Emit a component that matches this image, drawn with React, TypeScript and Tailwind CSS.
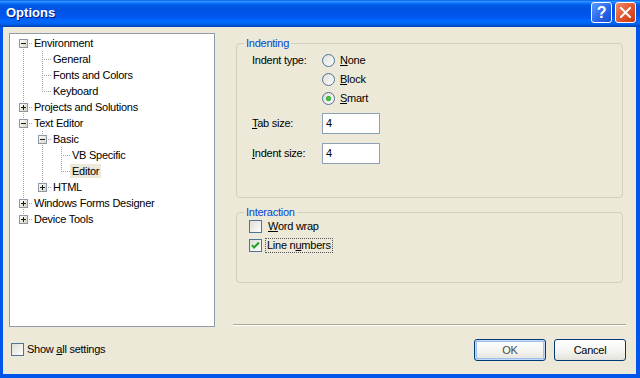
import React from 'react';

type Node = {
  label: string;
  level: number;
  box?: 'plus' | 'minus';
  first?: boolean;
  last?: boolean;
  rails?: number[];
  selected?: boolean;
};

const tree: Node[] = [
  { label: 'Environment', level: 0, box: 'minus', first: true },
  { label: 'General', level: 1, rails: [0] },
  { label: 'Fonts and Colors', level: 1, rails: [0] },
  { label: 'Keyboard', level: 1, rails: [0], last: true },
  { label: 'Projects and Solutions', level: 0, box: 'plus' },
  { label: 'Text Editor', level: 0, box: 'minus' },
  { label: 'Basic', level: 1, box: 'minus', rails: [0] },
  { label: 'VB Specific', level: 2, rails: [0, 1] },
  { label: 'Editor', level: 2, rails: [0, 1], last: true, selected: true },
  { label: 'HTML', level: 1, box: 'plus', rails: [0], last: true },
  { label: 'Windows Forms Designer', level: 0, box: 'plus' },
  { label: 'Device Tools', level: 0, box: 'plus', last: true },
];

const dot = '#A0A0A0';

const Gutter: React.FC<{ n: Node }> = ({ n }) => {
  const w = 22 + 19 * n.level;
  const c = 13 + 19 * n.level;
  return (
    <svg width={w} height={16} className="shrink-0" shapeRendering="crispEdges">
      {(n.rails || []).map((a) => (
        <line key={a} x1={13 + 19 * a + 0.5} y1={0} x2={13 + 19 * a + 0.5} y2={16} stroke={dot} strokeDasharray="1 1" />
      ))}
      {!n.first && <line x1={c + 0.5} y1={0} x2={c + 0.5} y2={8} stroke={dot} strokeDasharray="1 1" />}
      {!n.last && <line x1={c + 0.5} y1={8} x2={c + 0.5} y2={16} stroke={dot} strokeDasharray="1 1" />}
      <line x1={c} y1={8.5} x2={c + 10} y2={8.5} stroke={dot} strokeDasharray="1 1" />
      {n.box && (
        <g>
          <defs>
            <linearGradient id="bx" x1="0" y1="0" x2="1" y2="1">
              <stop offset="0" stopColor="#ffffff" />
              <stop offset="1" stopColor="#D6D2C2" />
            </linearGradient>
          </defs>
          <rect x={c - 4 + 0.5} y={4.5} width={8} height={8} fill="url(#bx)" stroke="#8C98A6" />
          <line x1={c - 2} y1={8.5} x2={c + 3} y2={8.5} stroke="#1a1a1a" />
          {n.box === 'plus' && <line x1={c + 0.5} y1={6} x2={c + 0.5} y2={11} stroke="#1a1a1a" />}
        </g>
      )}
    </svg>
  );
};

const Radio: React.FC<{ checked?: boolean }> = ({ checked }) => (
  <svg width={13} height={13} className="shrink-0">
    <defs>
      <linearGradient id="rg" x1="0" y1="0" x2="1" y2="1">
        <stop offset="0" stopColor="#DCDBD5" />
        <stop offset="1" stopColor="#ffffff" />
      </linearGradient>
      <radialGradient id="rd">
        <stop offset="0" stopColor="#5BD35B" />
        <stop offset="1" stopColor="#21A121" />
      </radialGradient>
    </defs>
    <circle cx={6.5} cy={6.5} r={6} fill="url(#rg)" stroke="#4F7396" />
    {checked && <circle cx={6.5} cy={6.5} r={2.5} fill="url(#rd)" />}
  </svg>
);

const Check: React.FC<{ checked?: boolean }> = ({ checked }) => (
  <svg width={13} height={13} className="shrink-0" shapeRendering="crispEdges">
    <defs>
      <linearGradient id="cg" x1="0" y1="0" x2="1" y2="1">
        <stop offset="0" stopColor="#DCDBD5" />
        <stop offset="1" stopColor="#ffffff" />
      </linearGradient>
    </defs>
    <rect x={0.5} y={0.5} width={12} height={12} fill="url(#cg)" stroke="#4F7396" />
    {checked && (
      <path d="M3 6 L5 8.5 L10 3.5" fill="none" stroke="#21A121" strokeWidth={2} shapeRendering="auto" />
    )}
  </svg>
);

const Group: React.FC<{ title: string; h: string; mt: string; children: React.ReactNode }> = ({ title, h, mt, children }) => (
  <fieldset className={`mx-[3px] ${mt} ${h} rounded-[4px] border border-[#D0D0BF] p-0`}>
    <legend className="ml-[7px] px-[2px] text-[11px] leading-[13px] text-[#0046D5]">{title}</legend>
    {children}
  </fieldset>
);

const Field: React.FC<{ value: string }> = ({ value }) => (
  <div className="flex h-[21px] w-[58px] items-center border border-[#8DA2B9] bg-white pl-[3px]">{value}</div>
);

export default function App() {
  return (
    <div className="flex h-[378px] w-[640px] flex-col font-['Liberation_Sans',Arial,sans-serif] text-[11px] tracking-[-0.25px] text-black">
      <div className="flex h-[27px] shrink-0 items-start justify-between bg-[linear-gradient(to_bottom,#0058EE_0%,#3593FF_5%,#127DFF_10%,#0262EE_16%,#0057E5_22%,#0054E3_30%,#0055EB_56%,#005BF5_68%,#026AFE_78%,#0062EF_88%,#0052D6_94%,#0040AB_100%)]">
        <span className="ml-[6px] mt-[5px] text-[13px] font-bold leading-[16px] tracking-normal text-white [text-shadow:1px_1px_#0A1883]">Options</span>
        <div className="mr-[4px] mt-[2px] flex gap-[3px]">
          <div className="flex h-[21px] w-[21px] items-center justify-center rounded-[3px] border border-white bg-[linear-gradient(135deg,#5A9BFF,#2762E8_60%,#1A4FD0)] text-[16px] font-bold leading-none text-white">
            ?
          </div>
          <div className="flex h-[21px] w-[21px] items-center justify-center rounded-[3px] border border-white bg-[linear-gradient(135deg,#F08A66,#E0532C_55%,#C63A12)]">
            <svg width={11} height={11}>
              <path d="M1 1 L10 10 M10 1 L1 10" stroke="#fff" strokeWidth={2} strokeLinecap="square" />
            </svg>
          </div>
        </div>
      </div>
      <div className="flex flex-1 flex-col border-b-[4px] border-l-[3px] border-r-[4px] border-[#0055EA] bg-[#ECE9D8] pl-[6px] pr-[10px] pt-[6px]">
        <div className="flex">
          <div className="h-[294px] w-[206px] shrink-0 border border-[#8E9BA8] bg-white pt-[1px]">
            {tree.map((n) => (
              <div key={n.label} className="flex h-[16px] items-center">
                <Gutter n={n} />
                <span className={`px-[2px] leading-[14px] whitespace-nowrap ${n.selected ? 'bg-[#ECE9D8]' : ''}`}>{n.label}</span>
              </div>
            ))}
          </div>
          <div className="ml-[18px] flex h-[294px] flex-1 flex-col">
            <Group title="Indenting" h="h-[161px]" mt="mt-[4px]">
              <div className="flex flex-col pl-[15px] pt-[1px]">
                <div className="flex">
                  <span className="flex h-[19px] w-[70px] items-center">Indent type:</span>
                  <div className="flex flex-col">
                    <div className="flex h-[19px] items-center gap-[5px]">
                      <Radio />
                      <span><u>N</u>one</span>
                    </div>
                    <div className="flex h-[19px] items-center gap-[5px]">
                      <Radio />
                      <span><u>B</u>lock</span>
                    </div>
                    <div className="flex h-[19px] items-center gap-[5px]">
                      <Radio checked />
                      <span><u>S</u>mart</span>
                    </div>
                  </div>
                </div>
                <div className="mt-[5px] flex items-center">
                  <span className="w-[70px]"><u>T</u>ab size:</span>
                  <Field value="4" />
                </div>
                <div className="mt-[9px] flex items-center">
                  <span className="w-[70px]"><u>I</u>ndent size:</span>
                  <Field value="4" />
                </div>
              </div>
            </Group>
            <Group title="Interaction" h="h-[77px]" mt="mt-[8px]">
              <div className="flex flex-col gap-[6px] pl-[12px] pt-[1px]">
                <div className="flex h-[13px] items-center gap-[6px]">
                  <Check />
                  <span><u>W</u>ord wrap</span>
                </div>
                <div className="flex h-[13px] items-center gap-[3px]">
                  <Check checked />
                  <span className="border border-dotted border-[#555] px-[1px] leading-[13px]">
                    Line n<u>u</u>mbers
                  </span>
                </div>
              </div>
            </Group>
            <div className="mt-auto mb-[1px] h-[2px] border-b border-t border-b-white border-t-[#ACA899]" />
          </div>
        </div>
        <div className="flex items-start justify-between">
          <div className="ml-[2px] mt-[14px] flex items-center gap-[3px]">
            <Check />
            <span>Show <u>a</u>ll settings</span>
          </div>
          <div className="mt-[12px] flex gap-[8px]">
            <button className="flex h-[22px] w-[72px] items-center justify-center rounded-[3px] border border-[#003C74] bg-[linear-gradient(to_bottom,#FFFFFF,#F3F3EF_60%,#E3E2DA)] text-[#4a4a4a] shadow-[inset_0_0_0_1px_#C4D8F8,inset_0_0_0_2px_#A0BFF0]">
              OK
            </button>
            <button className="flex h-[22px] w-[72px] items-center justify-center rounded-[3px] border border-[#003C74] bg-[linear-gradient(to_bottom,#FFFFFF,#F3F3EF_60%,#E3E2DA)]">
              Cancel
            </button>
          </div>
        </div>
      </div>
    </div>
  );
}
